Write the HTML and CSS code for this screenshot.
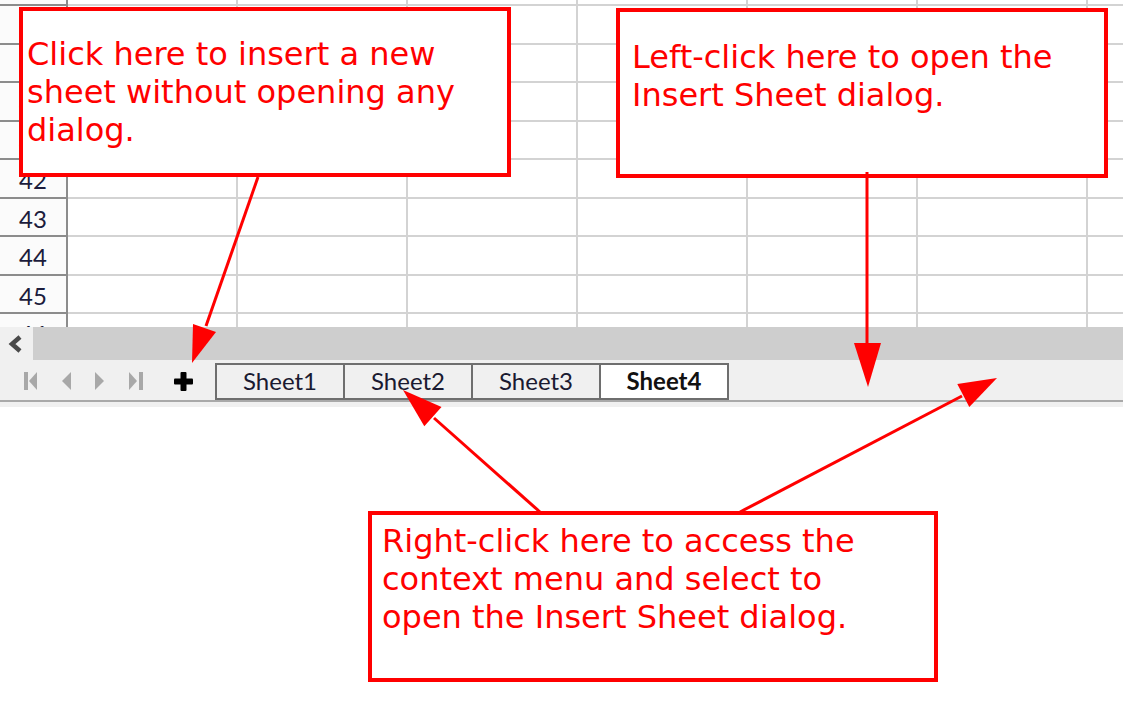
FILE: index.html
```html
<!DOCTYPE html>
<html>
<head>
<meta charset="utf-8">
<link rel="stylesheet" href="styles.css">
</head>
<body>
<div class="app">
  <div class="grid">
    <div class="row row-top"><div class="hdr"></div><div class="cell"></div><div class="cell"></div><div class="cell"></div><div class="cell"></div><div class="cell"></div><div class="cell"></div><div class="cell last"></div></div>
    <div class="row"><div class="hdr">38</div><div class="cell"></div><div class="cell"></div><div class="cell"></div><div class="cell"></div><div class="cell"></div><div class="cell"></div><div class="cell last"></div></div>
    <div class="row"><div class="hdr">39</div><div class="cell"></div><div class="cell"></div><div class="cell"></div><div class="cell"></div><div class="cell"></div><div class="cell"></div><div class="cell last"></div></div>
    <div class="row"><div class="hdr">40</div><div class="cell"></div><div class="cell"></div><div class="cell"></div><div class="cell"></div><div class="cell"></div><div class="cell"></div><div class="cell last"></div></div>
    <div class="row"><div class="hdr">41</div><div class="cell"></div><div class="cell"></div><div class="cell"></div><div class="cell"></div><div class="cell"></div><div class="cell"></div><div class="cell last"></div></div>
    <div class="row"><div class="hdr">42</div><div class="cell"></div><div class="cell"></div><div class="cell"></div><div class="cell"></div><div class="cell"></div><div class="cell"></div><div class="cell last"></div></div>
    <div class="row"><div class="hdr">43</div><div class="cell"></div><div class="cell"></div><div class="cell"></div><div class="cell"></div><div class="cell"></div><div class="cell"></div><div class="cell last"></div></div>
    <div class="row"><div class="hdr">44</div><div class="cell"></div><div class="cell"></div><div class="cell"></div><div class="cell"></div><div class="cell"></div><div class="cell"></div><div class="cell last"></div></div>
    <div class="row"><div class="hdr">45</div><div class="cell"></div><div class="cell"></div><div class="cell"></div><div class="cell"></div><div class="cell"></div><div class="cell"></div><div class="cell last"></div></div>
    <div class="row row-cut"><div class="hdr">46</div><div class="cell"></div><div class="cell"></div><div class="cell"></div><div class="cell"></div><div class="cell"></div><div class="cell"></div><div class="cell last"></div></div>
  </div>

  <div class="hscroll">
    <div class="scroll-btn">
      <svg class="chev" width="16" height="20" viewBox="0 0 16 20"><path d="M13 3 L5 10 L13 17" fill="none" stroke="#4a4a4a" stroke-width="4.5"/></svg>
    </div>
    <div class="scroll-track"></div>
  </div>

  <div class="tabbar">
    <div class="nav">
      <span class="navbtn"><svg width="14" height="20" viewBox="0 0 14 20"><rect x="0" y="1" width="4" height="18" fill="#a8a8a8"/><path d="M13 1 L5 10 L13 19 Z" fill="#a8a8a8"/></svg></span>
      <span class="navbtn"><svg width="14" height="20" viewBox="0 0 14 20"><path d="M12 1 L3 10 L12 19 Z" fill="#a8a8a8"/></svg></span>
      <span class="navbtn"><svg width="14" height="20" viewBox="0 0 14 20"><path d="M1 1 L10 10 L1 19 Z" fill="#a8a8a8"/></svg></span>
      <span class="navbtn"><svg width="14" height="20" viewBox="0 0 14 20"><path d="M0 1 L8 10 L0 19 Z" fill="#a8a8a8"/><rect x="10" y="1" width="4" height="18" fill="#a8a8a8"/></svg></span>
    </div>
    <div class="add">
      <svg width="21" height="21" viewBox="0 0 21 21"><rect x="7.5" y="1" width="6" height="19" rx="1" fill="#000"/><rect x="1" y="7.5" width="19" height="6" rx="1" fill="#000"/></svg>
    </div>
    <div class="tabs">
      <div class="tab">Sheet1</div>
      <div class="tab">Sheet2</div>
      <div class="tab">Sheet3</div>
      <div class="tab active">Sheet4</div>
    </div>
  </div>
  <div class="tabbar-foot"></div>
</div>

<div class="callout c1">Click here to insert a new<br>sheet without opening any<br>dialog.</div>
<div class="callout c2">Left-click here to open the<br>Insert Sheet dialog.</div>
<div class="callout c3">Right-click here to access the<br>context menu and select to<br>open the Insert Sheet dialog.</div>

<svg class="arrows" width="1123" height="706" viewBox="0 0 1123 706">
  <g stroke="#ff0000" stroke-width="3" fill="none">
    <line x1="258" y1="177" x2="206" y2="326"/>
    <line x1="867" y1="172" x2="867" y2="346"/>
    <line x1="540" y1="512" x2="434" y2="418"/>
    <line x1="740" y1="512" x2="962" y2="396"/>
  </g>
  <g fill="#ff0000">
    <polygon points="192,363 193,324 216,332"/>
    <polygon points="868,387 854,343 881,343"/>
    <polygon points="403,390 441.5,406.9 424.3,426.3"/>
    <polygon points="997,378 969.3,407.1 957.3,384.1"/>
  </g>
</svg>
</body>
</html>
```
FILE: styles.css
```css
html, body {
  margin: 0;
  padding: 0;
  background: #ffffff;
  overflow: hidden;
}

body {
  width: 1123px;
  height: 706px;
  position: relative;
  font-family: "Lato", "Open Sans", sans-serif;
}

.app {
  display: flex;
  flex-direction: column;
  width: 1123px;
}

.grid {
  display: flex;
  flex-direction: column;
  height: 327px;
  overflow: hidden;
}

.row {
  display: grid;
  grid-template-columns: 68px repeat(6, 170px) 1fr;
  height: 38.5px;
  flex: none;
}

.row-top {
  height: 6px;
}

.hdr {
  box-sizing: border-box;
  border-right: 2px solid #8c8c8c;
  border-bottom: 2px solid #8c8c8c;
  background: #fbfbfb;
  color: #1c1c3c;
  font-size: 24px;
  line-height: 36px;
  text-align: center;
  padding-top: 2px;
  overflow: hidden;
}

.cell {
  box-sizing: border-box;
  border-right: 2px solid #d3d3d3;
  border-bottom: 2px solid #d3d3d3;
}

.cell.last {
  border-right: none;
}

.hscroll {
  display: flex;
  height: 33px;
}

.scroll-btn {
  width: 33px;
  background: #f0f0f0;
  display: flex;
  align-items: center;
  padding-left: 7px;
  box-sizing: border-box;
}

.chev {
  display: block;
}

.scroll-track {
  flex: 1;
  background: #cecece;
}

.tabbar {
  display: flex;
  height: 40px;
  background: #f0f0f0;
  border-bottom: 2px solid #a9a9a9;
}

.nav {
  display: flex;
  align-items: center;
  padding-left: 24px;
}

.navbtn {
  width: 35px;
  display: flex;
  align-items: center;
  padding-top: 2px;
}

.add {
  width: 51px;
  box-sizing: border-box;
  padding-left: 9px;
  display: flex;
  align-items: center;
  padding-top: 3px;
}

.tabs {
  display: flex;
  align-items: flex-end;
}

.tab {
  box-sizing: border-box;
  width: 130px;
  height: 37px;
  margin-left: -2px;
  border: 2px solid #6e6e6e;
  background: #f0f0f0;
  color: #1a1a30;
  font-size: 24px;
  line-height: 32px;
  text-align: center;
}

.tab:first-child {
  margin-left: 0;
}

.tab.active {
  background: #ffffff;
  font-weight: bold;
  color: #111111;
}

.tabbar-foot {
  height: 5px;
  background: #f0f0f0;
}

.callout {
  position: absolute;
  box-sizing: border-box;
  border: 4px solid #ff0000;
  background: #ffffff;
  color: #ff0000;
  font-family: "DejaVu Sans", sans-serif;
  font-size: 32px;
  line-height: 38px;
  white-space: nowrap;
}

.c1 {
  left: 19px;
  top: 7px;
  width: 492px;
  height: 170px;
  padding: 24px 4px 0 4px;
}

.c2 {
  left: 616px;
  top: 8px;
  width: 492px;
  height: 170px;
  padding: 26px 12px 0 12px;
}

.c3 {
  left: 368px;
  top: 511px;
  width: 570px;
  height: 171px;
  padding: 7px 10px 0 10px;
}

.arrows {
  position: absolute;
  left: 0;
  top: 0;
  pointer-events: none;
}
```
